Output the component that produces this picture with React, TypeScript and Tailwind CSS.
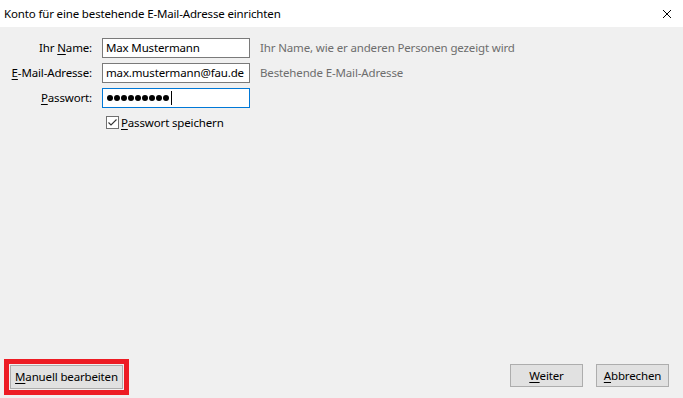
import React from "react";

const font = { fontFamily: '"Noto Sans", "Liberation Sans", sans-serif' };

function Key({ children }: { children: React.ReactNode }) {
  return <span className="underline underline-offset-2">{children}</span>;
}

function Field({ value, focused }: { value: React.ReactNode; focused?: boolean }) {
  return (
    <div
      className={`h-[20px] w-[148px] bg-white border flex items-center px-[3px] text-black whitespace-nowrap overflow-hidden ${
        focused ? "border-[#0078d7]" : "border-[#7a7a7a]"
      }`}
    >
      {value}
    </div>
  );
}

const dots = [0, 1, 2, 3, 4, 5, 6, 7, 8];

export default function App() {
  return (
    <div
      className="w-[683px] h-[398px] bg-[#f0f0f0] flex flex-col text-[11.5px] tracking-[-0.15px] leading-none text-black overflow-hidden"
      style={font}
    >
      {/* title bar */}
      <div className="h-[27px] bg-white flex items-center justify-between pl-[4px] pr-[11px] shrink-0">
        <span>Konto für eine bestehende E-Mail-Adresse einrichten</span>
        <svg width="10" height="10" viewBox="0 0 10 10" className="text-black">
          <path d="M1 1 L9 9 M9 1 L1 9" stroke="currentColor" strokeWidth="1" />
        </svg>
      </div>

      {/* form */}
      <div className="grid grid-cols-[92px_148px_auto] gap-x-[10px] gap-y-[5px] mt-[11px] items-center">
        <div className="text-right">
          Ihr <Key>N</Key>ame:
        </div>
        <Field value="Max Mustermann" />
        <div className="text-[#6d6d6d]">Ihr Name, wie er anderen Personen gezeigt wird</div>

        <div className="text-right">
          <Key>E</Key>-Mail-Adresse:
        </div>
        <Field value="max.mustermann@fau.de" />
        <div className="text-[#6d6d6d]">Bestehende E-Mail-Adresse</div>

        <div className="text-right">
          <Key>P</Key>asswort:
        </div>
        <Field
          focused
          value={
            <span className="flex items-center gap-[1px] pl-[1px]">
              {dots.map((d) => (
                <span key={d} className="w-[6px] h-[6px] rounded-full bg-black" />
              ))}
              <span className="ml-[1px] w-px h-[14px] bg-black" />
            </span>
          }
        />
        <div />
      </div>

      <div className="flex items-center ml-[106px] mt-[8px] gap-[2px]">
        <div className="w-[13px] h-[13px] border border-[#707070] bg-white flex items-center justify-center">
          <svg width="11" height="11" viewBox="0 0 11 11">
            <path d="M1.5 5.5 L4 8 L9.5 2.5" fill="none" stroke="#333" strokeWidth="1.1" />
          </svg>
        </div>
        <span>
          <Key>P</Key>asswort speichern
        </span>
      </div>

      {/* buttons */}
      <div className="mt-auto flex items-end justify-between">
        <div className="ml-[4px] mb-[3px] border-[5px] border-[#ed1c24] p-px">
          <button className="h-[24px] w-[113px] bg-[#e1e1e1] border border-[#adadad]">
            <Key>M</Key>anuell bearbeiten
          </button>
        </div>
        <div className="flex gap-[13px] mr-[14px] mb-[11px]">
          <button className="h-[23px] w-[73px] bg-[#e1e1e1] border border-[#adadad]">
            <Key>W</Key>eiter
          </button>
          <button className="h-[23px] w-[73px] bg-[#e1e1e1] border border-[#adadad]">
            <Key>A</Key>bbrechen
          </button>
        </div>
      </div>
    </div>
  );
}
